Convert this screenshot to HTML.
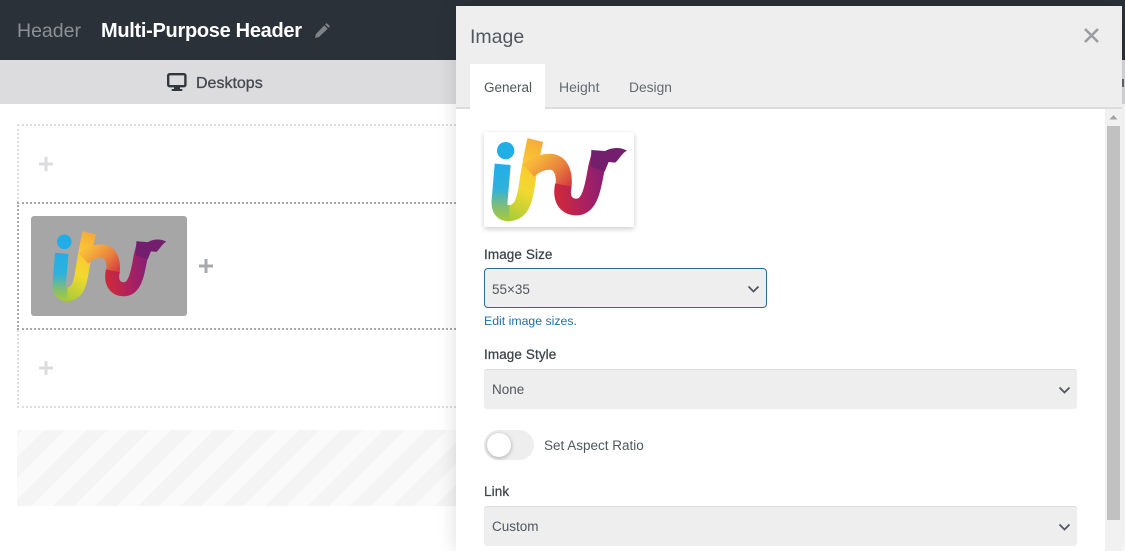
<!DOCTYPE html>
<html><head><meta charset="utf-8">
<style>
html,body{margin:0;padding:0}
body{width:1125px;height:551px;position:relative;overflow:hidden;background:#fff;font-family:"Liberation Sans",sans-serif}
.a{position:absolute;white-space:nowrap}
.sel{position:absolute;left:484px;width:593px;height:40px;background:#eeeeef;border-radius:3px;box-sizing:border-box;font-size:13.5px;color:#50575e;line-height:41px;padding-left:8px;box-shadow:inset 0 1px 0 #dedede}
.lbl{position:absolute;left:484px;font-size:13.5px;color:#3c434a;-webkit-text-stroke:.25px #3c434a;letter-spacing:.1px}
.dot{position:absolute;left:17px;width:439px;box-sizing:border-box}
</style></head><body>
<svg width="0" height="0" style="position:absolute">
<defs>
<linearGradient id="g1" gradientUnits="userSpaceOnUse" x1="0" y1="130" x2="0" y2="300"><stop offset="0" stop-color="#22aee6"/><stop offset=".45" stop-color="#2eb2dc"/><stop offset=".75" stop-color="#7fbc7a"/><stop offset="1" stop-color="#a5cb3a"/></linearGradient>
<linearGradient id="g2" gradientUnits="userSpaceOnUse" x1="90" y1="290" x2="200" y2="60"><stop offset="0" stop-color="#a5cb3a"/><stop offset=".4" stop-color="#f2d92f"/><stop offset=".72" stop-color="#fbc732"/><stop offset="1" stop-color="#f5ab3a"/></linearGradient>
<linearGradient id="g3" gradientUnits="userSpaceOnUse" x1="190" y1="120" x2="290" y2="220"><stop offset="0" stop-color="#f8b93a"/><stop offset=".5" stop-color="#e8813f"/><stop offset="1" stop-color="#d3303e"/></linearGradient>
<linearGradient id="g4" gradientUnits="userSpaceOnUse" x1="270" y1="220" x2="400" y2="200"><stop offset="0" stop-color="#c9283f"/><stop offset=".5" stop-color="#ad2160"/><stop offset="1" stop-color="#8a1f72"/></linearGradient>
<symbol id="logo" viewBox="0 0 540 360">
<circle cx="107" cy="92" r="26" fill="#21aee6"/>
<path d="M110 280 C152 280 162 250 170 200 C176 160 184 110 196 60" fill="none" stroke="url(#g2)" stroke-width="48"/>
<path d="M98 133 L89 240 C86 268 98 280 118 280" fill="none" stroke="url(#g1)" stroke-width="48"/>
<path d="M176 152 C198 132 225 122 248 126 C275 132 286 165 280 205" fill="none" stroke="url(#g3)" stroke-width="48"/>
<path d="M280 195 C270 245 295 262 322 261 C362 259 370 195 380 140 L390 102" fill="none" stroke="url(#g4)" stroke-width="50"/>
<path d="M364 90 L405 93 C425 82 450 80 471 92 C455 100 450 115 436 128 L416 126 L404 155 L362 140 Z" fill="#741f6e"/>
</symbol>
</defs>
</svg>

<!-- top bars -->
<div class="a" style="left:0;top:0;width:1125px;height:60px;background:#2b3138"></div>
<div class="a" style="left:0;top:60px;width:1125px;height:44px;background:#dcdcde"></div>
<div class="a" style="left:17px;top:20px;font-size:19.5px;color:#8c8f94">Header</div>
<div class="a" style="left:101px;top:20px;font-size:20px;font-weight:700;color:#fff;letter-spacing:-.3px">Multi-Purpose Header</div>
<svg class="a" style="left:314px;top:22px" width="17" height="17" viewBox="0 0 17 17"><path d="M12.600 1 L16 4.200 L14.600 5.800 L11.200 2.500 Z M10.300 3.400 L13.700 6.700 L5 15 L1 16 L2 12 Z" fill="#7f8387"/></svg>
<svg class="a" style="left:167px;top:73px" width="20" height="19" viewBox="0 0 20 19"><rect x="1.200" y="1.200" width="17.200" height="12" rx="1.500" fill="none" stroke="#32373c" stroke-width="2.400"/><rect x="7" y="14" width="6" height="2.500" fill="#32373c"/><rect x="4.500" y="16" width="11" height="2" rx="1" fill="#32373c"/></svg>
<div class="a" style="left:196px;top:75px;font-size:16px;color:#444950;-webkit-text-stroke:.3px #444950">Desktops</div>

<!-- rows -->
<div class="dot" style="top:124px;height:79px;border:2px dotted #dcdcdc;border-right:0;border-bottom:0"></div>
<div class="dot" style="top:330px;height:78px;border:2px dotted #dcdcdc;border-right:0;border-top:0"></div>
<div class="dot" style="top:202px;height:128px;border:2px dotted #a8a8a8;border-right:0"></div>
<div class="a" style="left:31px;top:216px;width:156px;height:100px;background:#a6a6a6;border-radius:3px"></div>
<svg class="a" style="left:34px;top:216px" width="152" height="101"><use href="#logo" width="152" height="101"/></svg>
<svg class="a" style="left:39px;top:157px" width="14" height="14"><path d="M5.500 0h3v5.500H14v3H8.500V14h-3V8.500H0v-3h5.500z" fill="#dcdcde"/></svg>
<svg class="a" style="left:199px;top:259px" width="14" height="14"><path d="M5.500 0h3v5.500H14v3H8.500V14h-3V8.500H0v-3h5.500z" fill="#a7aaad"/></svg>
<svg class="a" style="left:39px;top:361px" width="14" height="14"><path d="M5.500 0h3v5.500H14v3H8.500V14h-3V8.500H0v-3h5.500z" fill="#dcdcde"/></svg>
<div class="a" style="left:17px;top:430px;width:439px;height:76px;background:repeating-linear-gradient(-45deg,#f4f4f4 0,#f4f4f4 15px,#fafafa 15px,#fafafa 30px)"></div>
<div class="a" style="left:1122px;top:79px;width:2px;height:8px;background:#666"></div>

<!-- panel -->
<div class="a" style="left:456px;top:6px;width:666px;height:545px;background:#fff;box-shadow:0 0 18px rgba(0,0,0,.14)"></div>
<div class="a" style="left:456px;top:6px;width:666px;height:101px;background:#eeeeef;border-bottom:2px solid #dcdcde"></div>
<div class="a" style="left:470px;top:26px;font-size:19.5px;color:#50575e">Image</div>
<svg class="a" style="left:1084px;top:28px" width="15" height="15" viewBox="0 0 15 15"><path d="M1 1L14 14M14 1L1 14" stroke="#9a9da0" stroke-width="2.600"/></svg>
<div class="a" style="left:470px;top:64px;width:75px;height:45px;background:#fff"></div>
<div class="a" style="left:484px;top:80px;font-size:13.5px;color:#50575e">General</div>
<div class="a" style="left:559px;top:79px;font-size:14px;color:#646970">Height</div>
<div class="a" style="left:629px;top:80px;font-size:13.8px;color:#646970">Design</div>

<!-- scrollbar -->
<div class="a" style="left:1105px;top:109px;width:17px;height:442px;background:#f1f1f1"></div>
<div class="a" style="left:1107px;top:126px;width:13px;height:394px;background:#c1c1c1"></div>
<svg class="a" style="left:1109px;top:114px" width="9" height="6"><path d="M4.500 1L8.500 5.500H.5z" fill="#a3a3a3"/></svg>

<!-- logo card -->
<div class="a" style="left:484px;top:132px;width:150px;height:95px;background:#fff;box-shadow:0 2px 5px rgba(0,0,0,.2)"></div>
<svg class="a" style="left:470px;top:120px" width="180" height="120"><use href="#logo" width="180" height="120"/></svg>

<div class="lbl" style="top:247px">Image Size</div>
<div class="sel" style="top:268px;width:283px;border:1px solid #2a6a96;line-height:41px;padding-left:7px;box-shadow:none;border-radius:4px">55×35</div>
<svg class="a" style="left:747px;top:285px" width="13" height="9"><path d="M1.500 1.500L6.500 6.500L11.500 1.500" fill="none" stroke="#50575e" stroke-width="1.800"/></svg>
<div class="a" style="left:484px;top:314px;font-size:12.3px;color:#2271a8">Edit image sizes.</div>

<div class="lbl" style="top:347px">Image Style</div>
<div class="sel" style="top:369px">None</div>
<svg class="a" style="left:1058px;top:386px" width="13" height="9"><path d="M1.500 1.500L6.500 6.500L11.500 1.500" fill="none" stroke="#50575e" stroke-width="1.800"/></svg>

<div class="a" style="left:484px;top:430px;width:50px;height:30px;border-radius:15px;background:#eeeeef"></div>
<div class="a" style="left:487px;top:433px;width:24px;height:24px;border-radius:50%;background:#fff;box-shadow:0 1px 4px rgba(0,0,0,.3)"></div>
<div class="a" style="left:544px;top:438px;font-size:13.5px;color:#50575e">Set Aspect Ratio</div>

<div class="lbl" style="top:484px">Link</div>
<div class="sel" style="top:506px">Custom</div>
<svg class="a" style="left:1058px;top:523px" width="13" height="9"><path d="M1.500 1.500L6.500 6.500L11.500 1.500" fill="none" stroke="#50575e" stroke-width="1.800"/></svg>
</body></html>
